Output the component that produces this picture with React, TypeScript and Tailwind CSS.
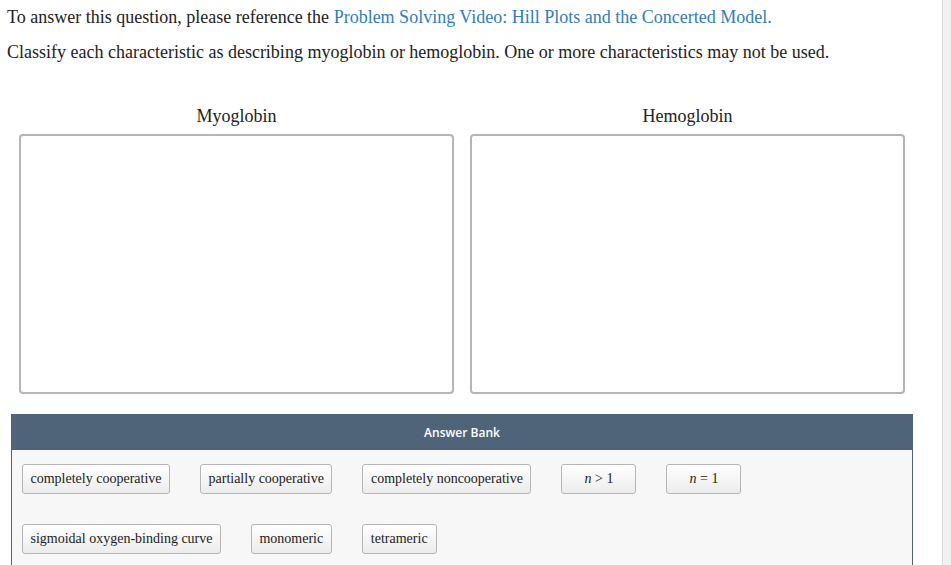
import React from "react";

const serif = { fontFamily: '"Liberation Serif", "Times New Roman", serif' };

const row1 = [
  { label: "completely cooperative" },
  { label: "partially cooperative" },
  { label: "completely noncooperative" },
  { label: "n > 1", math: true },
  { label: "n = 1", math: true },
];

const row2 = [{ label: "sigmoidal oxygen-binding curve" }, { label: "monomeric" }, { label: "tetrameric" }];

function Chip({ label, math }: { label: string; math?: boolean }) {
  const [n, ...rest] = label.split(" ");
  return (
    <div className="flex h-[30px] min-w-[75px] items-center justify-center rounded-[3px] border border-[#b5b5b5] bg-gradient-to-b from-white to-[#ececec] px-[7.5px] pb-[2px] text-[14px] text-[#222]">
      {math ? (
        <span>
          <i>{n}</i> {rest.join(" ")}
        </span>
      ) : (
        label
      )}
    </div>
  );
}

export default function App() {
  return (
    <div className="flex h-[565px] w-[951px] overflow-hidden bg-white" style={serif}>
      <div className="w-[942px] shrink-0">
        <div className="pl-[7px] pt-[6px] text-[18px] leading-[22px] text-[#222]">
          <p>
            To answer this question, please reference the{" "}
            <span className="text-[#2f7dc0]">Problem Solving Video: Hill Plots and the Concerted Model.</span>
          </p>
          <p className="mt-[13px]">
            Classify each characteristic as describing myoglobin or hemoglobin. One or more characteristics may not be used.
          </p>
        </div>

        <div className="mt-[42px] flex gap-[16px] pl-[19px]">
          {["Myoglobin", "Hemoglobin"].map((title) => (
            <div key={title} className="w-[435px]">
              <div className="text-center text-[18px] leading-[22px] text-[#222]">{title}</div>
              <div className="mt-[7px] h-[260px] rounded-[4px] border-2 border-[#b5b5b5] bg-white" />
            </div>
          ))}
        </div>

        <div className="ml-[11px] mt-[20px] w-[902px]">
          <div
            className="flex h-[36px] items-center justify-center bg-[#506479] pt-[1px] text-[12px] font-semibold text-white"
            style={{ fontFamily: '"Open Sans", "Noto Sans", sans-serif' }}
          >
            Answer Bank
          </div>
          <div className="h-[200px] border-x border-[#506479] bg-[#f7f7f7] px-[10px] pt-[14px]">
            <div className="flex gap-[30px]">
              {row1.map((c) => (
                <Chip key={c.label} {...c} />
              ))}
            </div>
            <div className="mt-[30px] flex gap-[30px]">
              {row2.map((c) => (
                <Chip key={c.label} {...c} />
              ))}
            </div>
          </div>
        </div>
      </div>
      <div className="flex-1 border-l border-[#dcdcdc] bg-[#f1f1f1]" />
    </div>
  );
}
